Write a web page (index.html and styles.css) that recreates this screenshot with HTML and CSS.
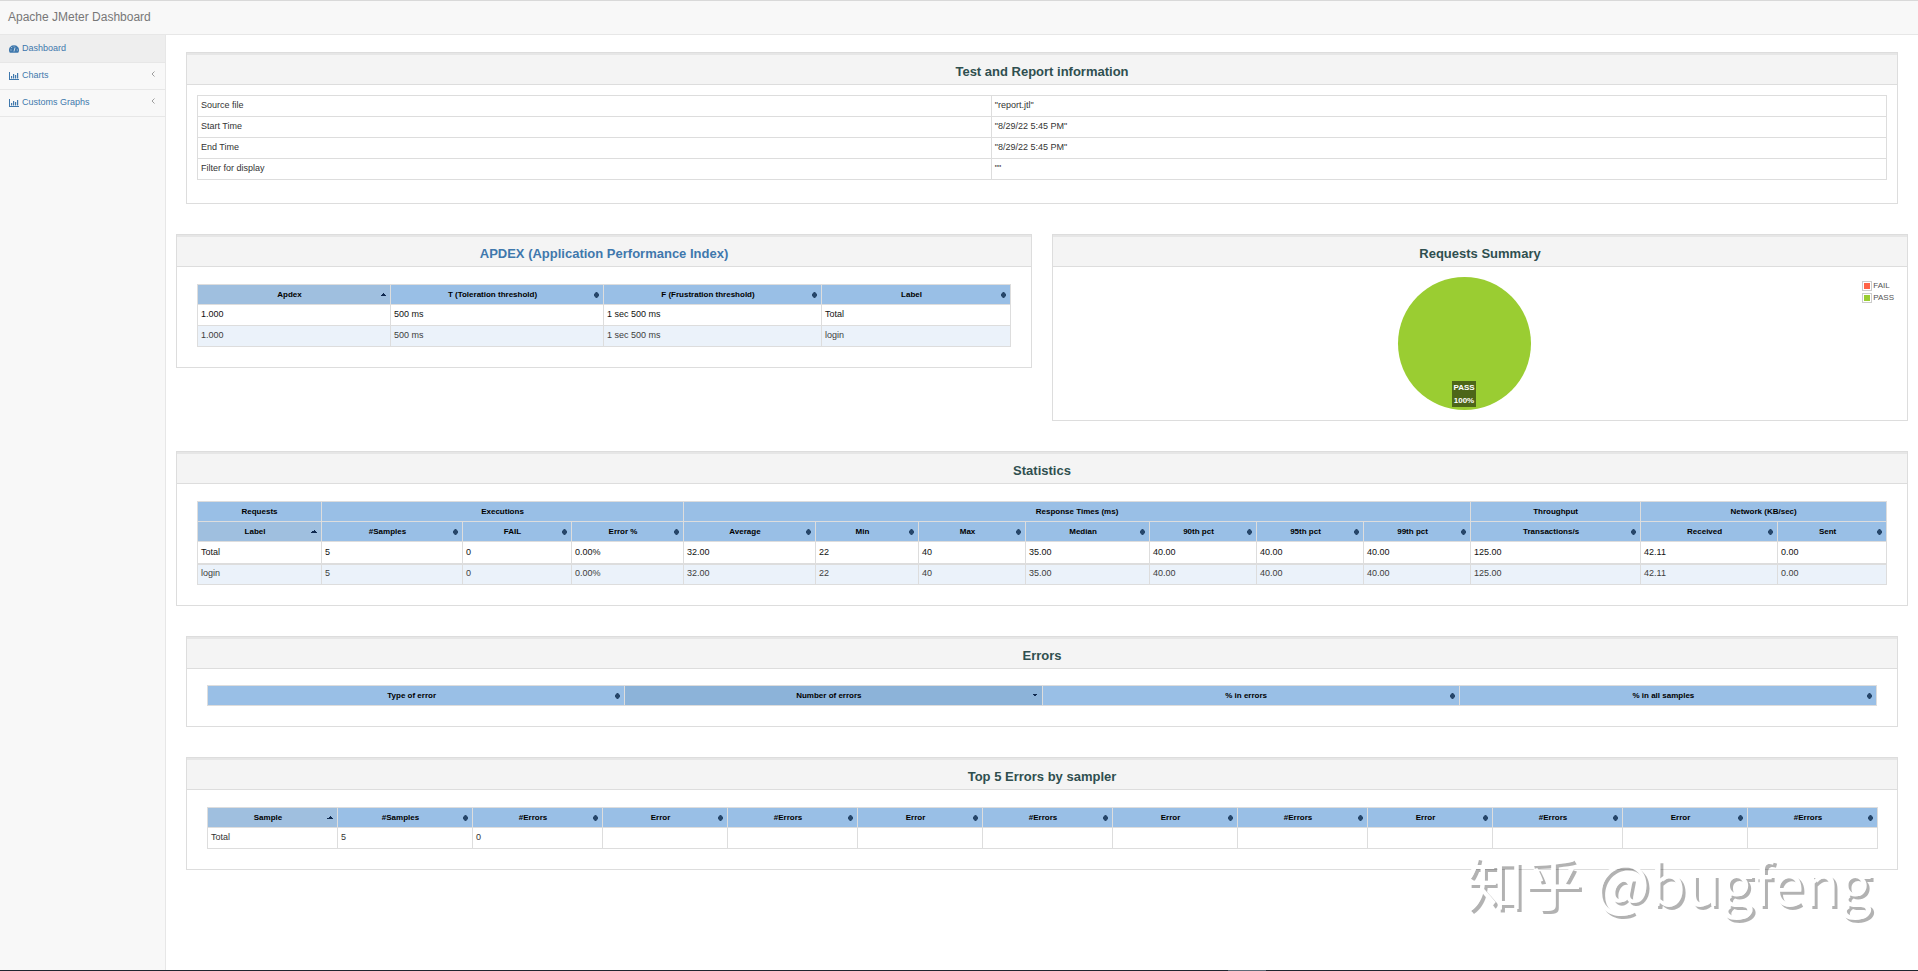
FILE: index.html
```html
<!DOCTYPE html>
<html lang="en">

<head>
    <meta charset="utf-8">
    <meta name="viewport" content="width=device-width, initial-scale=1">
    <title>Apache JMeter Dashboard</title>
    <link rel="stylesheet" href="styles.css">
</head>

<body>
    <nav class="navbar">
        <a class="navbar-brand" href="#">Apache JMeter Dashboard</a>
    </nav>

    <div class="wrapper">
        <ul class="sidebar">
            <li>
                <a class="active" href="#">
                    <svg class="icon" viewBox="0 0 10 9">
                        <path d="M5 1a5 5 0 0 0-4.200 7.700h8.400A5 5 0 0 0 5 1z" />
                        <path class="needle" d="M5 7.500L6 3.500M1.500 6h1M2.300 3.200l.8.800M7.800 6h1M4.500 2h1" />
                    </svg>
                    <span>Dashboard</span>
                </a>
            </li>
            <li>
                <a href="#">
                    <svg class="icon" viewBox="0 0 10 9">
                        <path d="M0 1h1v7h9v1H0zM2 5h1.200v2.500H2zM4 3h1.200v4.500H4zM6 4h1.200v3.500H6zM8 2h1.200v5.500H8z" />
                    </svg>
                    <span>Charts</span>
                    <svg class="arrow" viewBox="0 0 4 6"><path d="M3.500 .5L1 3l2.500 2.500" /></svg>
                </a>
            </li>
            <li>
                <a href="#">
                    <svg class="icon" viewBox="0 0 10 9">
                        <path d="M0 1h1v7h9v1H0zM2 5h1.200v2.500H2zM4 3h1.200v4.500H4zM6 4h1.200v3.500H6zM8 2h1.200v5.500H8z" />
                    </svg>
                    <span>Customs Graphs</span>
                    <svg class="arrow" viewBox="0 0 4 6"><path d="M3.500 .5L1 3l2.500 2.500" /></svg>
                </a>
            </li>
        </ul>

        <main class="page">
            <section class="panel inset">
                <h2>Test and Report information</h2>
                <div class="panel-body info-body">
                    <table class="info">
                        <tr>
                            <td>Source file</td>
                            <td>"report.jtl"</td>
                        </tr>
                        <tr>
                            <td>Start Time</td>
                            <td>"8/29/22 5:45 PM"</td>
                        </tr>
                        <tr>
                            <td>End Time</td>
                            <td>"8/29/22 5:45 PM"</td>
                        </tr>
                        <tr>
                            <td>Filter for display</td>
                            <td>""</td>
                        </tr>
                    </table>
                </div>
            </section>

            <div class="row">
                <section class="panel">
                    <h2><a href="#">APDEX (Application Performance Index)</a></h2>
                    <div class="panel-body">
                        <table class="sorter apdex">
                            <colgroup>
                                <col><col><col><col>
                            </colgroup>
                            <thead>
                                <tr>
                                    <th class="asc">Apdex</th>
                                    <th class="both">T (Toleration threshold)</th>
                                    <th class="both">F (Frustration threshold)</th>
                                    <th class="both">Label</th>
                                </tr>
                            </thead>
                            <tbody>
                                <tr class="total">
                                    <td>1.000</td>
                                    <td>500 ms</td>
                                    <td>1 sec 500 ms</td>
                                    <td>Total</td>
                                </tr>
                                <tr class="odd">
                                    <td>1.000</td>
                                    <td>500 ms</td>
                                    <td>1 sec 500 ms</td>
                                    <td>login</td>
                                </tr>
                            </tbody>
                        </table>
                    </div>
                </section>

                <section class="panel">
                    <h2>Requests Summary</h2>
                    <div class="chart">
                        <div class="pie">
                            <div class="pie-label">PASS<br>100%</div>
                        </div>
                        <ul class="legend">
                            <li><span class="swatch fail"></span>FAIL</li>
                            <li><span class="swatch pass"></span>PASS</li>
                        </ul>
                    </div>
                </section>
            </div>

            <section class="panel">
                <h2>Statistics</h2>
                <div class="panel-body">
                    <table class="sorter stats">
                        <colgroup>
                            <col><col><col><col><col><col><col>
                            <col><col><col><col><col><col><col>
                        </colgroup>
                        <thead>
                            <tr>
                                <th>Requests</th>
                                <th colspan="3">Executions</th>
                                <th colspan="7">Response Times (ms)</th>
                                <th>Throughput</th>
                                <th colspan="2">Network (KB/sec)</th>
                            </tr>
                            <tr>
                                <th class="asc">Label</th>
                                <th class="both">#Samples</th>
                                <th class="both">FAIL</th>
                                <th class="both">Error %</th>
                                <th class="both">Average</th>
                                <th class="both">Min</th>
                                <th class="both">Max</th>
                                <th class="both">Median</th>
                                <th class="both">90th pct</th>
                                <th class="both">95th pct</th>
                                <th class="both">99th pct</th>
                                <th class="both">Transactions/s</th>
                                <th class="both">Received</th>
                                <th class="both">Sent</th>
                            </tr>
                        </thead>
                        <tbody>
                            <tr class="total">
                                <td>Total</td>
                                <td>5</td>
                                <td>0</td>
                                <td>0.00%</td>
                                <td>32.00</td>
                                <td>22</td>
                                <td>40</td>
                                <td>35.00</td>
                                <td>40.00</td>
                                <td>40.00</td>
                                <td>40.00</td>
                                <td>125.00</td>
                                <td>42.11</td>
                                <td>0.00</td>
                            </tr>
                            <tr class="odd">
                                <td>login</td>
                                <td>5</td>
                                <td>0</td>
                                <td>0.00%</td>
                                <td>32.00</td>
                                <td>22</td>
                                <td>40</td>
                                <td>35.00</td>
                                <td>40.00</td>
                                <td>40.00</td>
                                <td>40.00</td>
                                <td>125.00</td>
                                <td>42.11</td>
                                <td>0.00</td>
                            </tr>
                        </tbody>
                    </table>
                </div>
            </section>

            <section class="panel inset">
                <h2>Errors</h2>
                <div class="panel-body errors-body">
                    <table class="sorter">
                        <thead>
                            <tr>
                                <th class="both">Type of error</th>
                                <th class="desc">Number of errors</th>
                                <th class="both">% in errors</th>
                                <th class="both">% in all samples</th>
                            </tr>
                        </thead>
                    </table>
                </div>
            </section>

            <section class="panel inset">
                <h2>Top 5 Errors by sampler</h2>
                <div class="panel-body">
                    <table class="sorter top5">
                        <colgroup>
                            <col><col><col><col><col><col><col>
                            <col><col><col><col><col><col>
                        </colgroup>
                        <thead>
                            <tr>
                                <th class="asc">Sample</th>
                                <th class="both">#Samples</th>
                                <th class="both">#Errors</th>
                                <th class="both">Error</th>
                                <th class="both">#Errors</th>
                                <th class="both">Error</th>
                                <th class="both">#Errors</th>
                                <th class="both">Error</th>
                                <th class="both">#Errors</th>
                                <th class="both">Error</th>
                                <th class="both">#Errors</th>
                                <th class="both">Error</th>
                                <th class="both">#Errors</th>
                            </tr>
                        </thead>
                        <tbody>
                            <tr>
                                <td>Total</td>
                                <td>5</td>
                                <td>0</td>
                                <td></td>
                                <td></td>
                                <td></td>
                                <td></td>
                                <td></td>
                                <td></td>
                                <td></td>
                                <td></td>
                                <td></td>
                                <td></td>
                            </tr>
                        </tbody>
                    </table>
                </div>
            </section>
        </main>
    </div>

    <div class="bottom-line"></div>
    <div class="watermark">知乎 @bugfeng</div>
</body>

</html>
```
FILE: styles.css
```css
* {
    box-sizing: border-box;
}

body {
    margin: 0;
    min-height: 100vh;
    display: flex;
    flex-direction: column;
    position: relative;
    background-color: #fff;
    color: #333;
    font-family: "Liberation Sans", Arial, sans-serif;
    font-size: 9px;
    line-height: 13px;
}

a {
    color: #3f78ad;
    text-decoration: none;
}

/* top bar */
.navbar {
    height: 35px;
    padding: 0 8px;
    display: flex;
    align-items: center;
    background-color: #f8f8f8;
    border-top: 1px solid #d9d9d9;
    border-bottom: 1px solid #e7e7e7;
}

.navbar-brand {
    color: #777;
    font-size: 12px;
}

.wrapper {
    flex: 1;
    display: flex;
}

.bottom-line {
    height: 1px;
    background: linear-gradient(90deg, #1f2630 64%, #5d6b78 0 66%, #1f2630 0);
}

/* left menu */
.sidebar {
    flex: 0 0 166px;
    margin: 0;
    padding: 0;
    list-style: none;
    background-color: #f8f8f8;
    border-right: 1px solid #e7e7e7;
}

.sidebar li {
    border-bottom: 1px solid #e7e7e7;
}

.sidebar a {
    display: flex;
    align-items: center;
    gap: 3px;
    padding: 7px 10px 7px 9px;
}

.sidebar a:not(.active) {
    padding-top: 6px;
}

.sidebar a.active {
    background-color: #eee;
}

.icon {
    width: 10px;
    height: 9px;
    fill: #3f78ad;
}

.needle {
    fill: none;
    stroke: #eee;
    stroke-width: .8;
}

.arrow {
    width: 4px;
    height: 6px;
    margin-left: auto;
    margin-bottom: 4px;
    fill: none;
    stroke: #777;
    stroke-width: .7;
}

/* content */
.page {
    flex: 1;
    min-width: 0;
    padding: 17px 10px;
}

.panel {
    margin-bottom: 30px;
    border: 1px solid #ddd;
    background-color: #fff;
}

.inset {
    margin-left: 10px;
    margin-right: 10px;
}

.panel h2 {
    height: 32px;
    margin: 0;
    padding-top: 2px;
    border-top: 2px solid #e6e6e6;
    border-bottom: 1px solid #ddd;
    background-color: #f4f4f4;
    color: #2f4f4f;
    font-size: 13px;
    line-height: 29px;
    text-align: center;
}

.panel-body {
    padding: 17px 20px 20px;
}

.info-body {
    padding: 10px 10px 23px;
}

.errors-body {
    padding-top: 16px;
}

.row {
    display: grid;
    grid-template-columns: 1fr 1fr;
    gap: 20px;
    align-items: start;
}

table {
    width: 100%;
    border-collapse: collapse;
    table-layout: fixed;
}

td {
    height: 21px;
    padding: 0 3px 2px;
    border: 1px solid #ddd;
}

.info td:first-child {
    width: 47%;
}

/* sortable tables */
.sorter th {
    height: 20px;
    padding: 0 12px 0 3px;
    border: 1px solid #ddd;
    background-color: #99bfe6;
    background-repeat: no-repeat;
    background-position: right 4px center;
    color: #000;
    font-size: 8px;
    line-height: 12px;
}

.sorter th:not([class]) {
    padding-right: 3px;
}

.sorter .both {
    background-image: radial-gradient(closest-side, #26466a 85%, transparent);
    background-size: 5px 6px;
}

.sorter .asc {
    background-color: #9fbfdf;
    background-image: conic-gradient(from 135deg at 50% 0, #102a50 90deg, transparent 0);
    background-size: 6px 3px;
}

.sorter .desc {
    background-color: #8cb3d9;
    background-image: conic-gradient(from -45deg at 50% 100%, #102a50 90deg, transparent 0);
    background-size: 6px 3px;
}

.total td {
    color: #111;
}

.odd td {
    background-color: #ebf2fa;
    color: #3d3d3d;
}

.apdex col:nth-child(1) { width: 193px; }
.apdex col:nth-child(2) { width: 213px; }
.apdex col:nth-child(3) { width: 218px; }
.apdex col:nth-child(4) { width: 189px; }

.stats col { width: 107px; }
.stats col:nth-child(1) { width: 124px; }
.stats col:nth-child(2) { width: 141px; }
.stats col:nth-child(3) { width: 109px; }
.stats col:nth-child(4) { width: 112px; }
.stats col:nth-child(5) { width: 132px; }
.stats col:nth-child(6) { width: 103px; }
.stats col:nth-child(8) { width: 124px; }
.stats col:nth-child(12) { width: 170px; }
.stats col:nth-child(13) { width: 137px; }
.stats col:nth-child(14) { width: 109px; }

.stats .total td {
    height: 22px;
    padding-bottom: 0;
    border-bottom: 2px solid #ddd;
}

.top5 col:nth-child(odd) { width: 130px; }
.top5 col:nth-child(even) { width: 125px; }
.top5 col:nth-child(2) { width: 135px; }

/* pie chart */
.chart {
    position: relative;
    display: flex;
    justify-content: center;
    padding: 10px 32px 10px 0;
}

.pie {
    width: 133px;
    height: 133px;
    padding-bottom: 3px;
    display: flex;
    align-items: flex-end;
    justify-content: center;
    border-radius: 50%;
    background-color: #9acd32;
}

.pie-label {
    width: 24px;
    background-color: rgba(0, 0, 0, .5);
    color: #fff;
    font-size: 8px;
    font-weight: bold;
    text-align: center;
}

.legend {
    position: absolute;
    top: 13px;
    right: 13px;
    margin: 0;
    padding: 0;
    list-style: none;
    color: #545454;
    font-size: 8px;
    line-height: 12px;
}

.legend li {
    display: flex;
    align-items: center;
    gap: 1px;
}

.swatch {
    width: 10px;
    height: 10px;
    border: 1px solid #ccc;
    padding: 1px;
    background-clip: content-box;
}

.fail {
    background-color: #ff6347;
}

.pass {
    background-color: #9acd32;
}

.watermark {
    position: absolute;
    right: 46px;
    bottom: 50px;
    color: #fff;
    font-family: "Noto Sans CJK SC", sans-serif;
    font-size: 58px;
    line-height: 80px;
    text-shadow: 3px 3px 0 rgba(0, 0, 0, .3);
}
```
